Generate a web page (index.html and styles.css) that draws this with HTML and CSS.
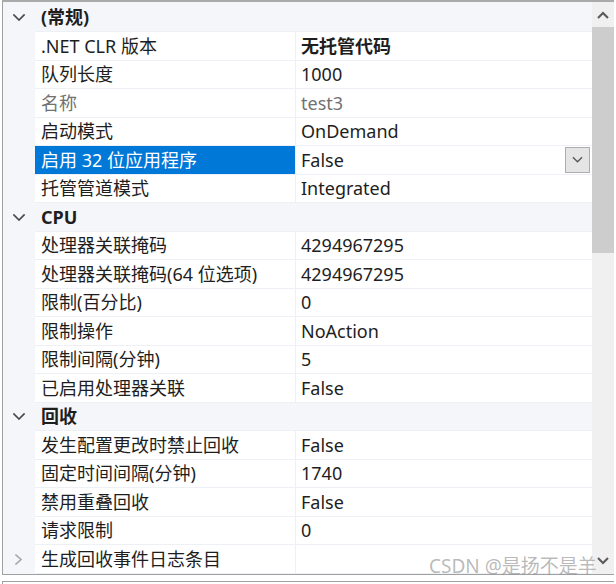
FILE: index.html
```html
<!DOCTYPE html>
<html lang="zh-CN">
<head>
  <meta charset="UTF-8" />
  <title>高级设置</title>
  <link rel="stylesheet" href="styles.css">
</head>
<body>

  <div class="frame">
    <div class="grid">
      <div class="rows">

        <div class="row cat">
          <span class="gutter"><svg class="expand" viewBox="0 0 12 7"><polyline points="1,1 6,6 11,1"/></svg></span>
          <span class="cell title">(常规)</span>
        </div>
        <div class="row"><span class="gutter"></span><span class="cell name">.NET CLR 版本</span><span class="cell val bold">无托管代码</span></div>
        <div class="row"><span class="gutter"></span><span class="cell name">队列长度</span><span class="cell val">1000</span></div>
        <div class="row dim"><span class="gutter"></span><span class="cell name">名称</span><span class="cell val">test3</span></div>
        <div class="row"><span class="gutter"></span><span class="cell name">启动模式</span><span class="cell val">OnDemand</span></div>
        <div class="row selected">
          <span class="gutter"></span>
          <span class="cell name">启用 32 位应用程序</span>
          <span class="cell val">False
            <span class="drop"><svg viewBox="0 0 12 7"><polyline points="1,1 6,6 11,1"/></svg></span>
          </span>
        </div>
        <div class="row"><span class="gutter"></span><span class="cell name">托管管道模式</span><span class="cell val">Integrated</span></div>

        <div class="row cat">
          <span class="gutter"><svg class="expand" viewBox="0 0 12 7"><polyline points="1,1 6,6 11,1"/></svg></span>
          <span class="cell title">CPU</span>
        </div>
        <div class="row"><span class="gutter"></span><span class="cell name">处理器关联掩码</span><span class="cell val">4294967295</span></div>
        <div class="row"><span class="gutter"></span><span class="cell name">处理器关联掩码(64 位选项)</span><span class="cell val">4294967295</span></div>
        <div class="row"><span class="gutter"></span><span class="cell name">限制(百分比)</span><span class="cell val">0</span></div>
        <div class="row"><span class="gutter"></span><span class="cell name">限制操作</span><span class="cell val">NoAction</span></div>
        <div class="row"><span class="gutter"></span><span class="cell name">限制间隔(分钟)</span><span class="cell val">5</span></div>
        <div class="row"><span class="gutter"></span><span class="cell name">已启用处理器关联</span><span class="cell val">False</span></div>

        <div class="row cat">
          <span class="gutter"><svg class="expand" viewBox="0 0 12 7"><polyline points="1,1 6,6 11,1"/></svg></span>
          <span class="cell title">回收</span>
        </div>
        <div class="row"><span class="gutter"></span><span class="cell name">发生配置更改时禁止回收</span><span class="cell val">False</span></div>
        <div class="row"><span class="gutter"></span><span class="cell name">固定时间间隔(分钟)</span><span class="cell val">1740</span></div>
        <div class="row"><span class="gutter"></span><span class="cell name">禁用重叠回收</span><span class="cell val">False</span></div>
        <div class="row"><span class="gutter"></span><span class="cell name">请求限制</span><span class="cell val">0</span></div>
        <div class="row">
          <span class="gutter"><svg class="collapsed" viewBox="0 0 7 11"><polyline points="1,1 6,5.5 1,10"/></svg></span>
          <span class="cell name">生成回收事件日志条目</span>
          <span class="cell val"></span>
        </div>

      </div>

      <div class="scrollbar">
        <div class="sb-btn"><svg viewBox="0 0 12 8"><polyline points="1,7 6,2 11,7"/></svg></div>
        <div class="sb-thumb"></div>
        <div class="sb-track"></div>
        <div class="sb-btn"><svg viewBox="0 0 12 8"><polyline points="1,1 6,6 11,1"/></svg></div>
      </div>
    </div>
  </div>

  <div class="desc"></div>

  <div class="watermark">CSDN @是扬不是羊</div>

</body>
</html>
```

FILE: styles.css
```css
body {
  margin: 0;
  font-family: "Noto Sans", "Noto Sans CJK SC", sans-serif;
  font-size: 18px;
  color: #1e1e1e;
  background: #fff;
  position: relative;
  height: 584px;
  overflow: hidden;
}
.frame {
  margin: 0 2px 0 2px;
  border-left: 1px solid #a0a0a0;
  border-top: 2px solid #aaaaaa;
  border-bottom: 1px solid #a0a0a0;
}
.grid {
  display: flex;
}
.rows {
  flex: 1;
  background: #f4f6fa;
  padding-top: 1.5px;
}
.row {
  display: grid;
  grid-template-columns: 32px 261px 1fr;
  height: 28.5px;
}
.gutter {
  display: flex;
  align-items: center;
  justify-content: center;
}
.gutter svg {
  fill: none;
  stroke-linecap: square;
}
.expand {
  width: 12px;
  height: 7px;
  stroke: #4a4a4a;
  stroke-width: 1.7;
}
.collapsed {
  width: 7px;
  height: 11px;
  stroke: #a8a8a8;
  stroke-width: 1.6;
  margin-right: 2px;
}
.cell {
  display: flex;
  align-items: center;
  box-sizing: border-box;
  border-bottom: 1px solid #edf0f5;
  background: #fff;
  white-space: nowrap;
  line-height: 1;
}
.name {
  padding-left: 6px;
  border-right: 1px solid #edf0f5;
}
.val {
  padding-left: 5px;
  justify-content: space-between;
}
.bold {
  font-weight: bold;
}
.cat .title {
  grid-column: 2 / 4;
  background: #f4f6fa;
  font-weight: bold;
  padding-left: 6px;
}
.dim .cell {
  color: #717171;
}
.selected .name {
  background: #0078d7;
  color: #fff;
}
.drop {
  width: 25px;
  height: 26px;
  box-sizing: border-box;
  margin-right: 2px;
  border: 1px solid #adadad;
  background: #e5e5e5;
  display: flex;
  align-items: center;
  justify-content: center;
}
.drop svg {
  width: 11px;
  height: 7px;
  fill: none;
  stroke: #555;
  stroke-width: 1.4;
}
.scrollbar {
  width: 22px;
  background: #f0f0f0;
  display: flex;
  flex-direction: column;
}
.sb-btn {
  height: 25px;
  display: flex;
  align-items: center;
  justify-content: center;
}
.sb-btn svg {
  width: 12px;
  height: 8px;
  fill: none;
  stroke: #5c5c5c;
  stroke-width: 2.2;
}
.sb-thumb {
  height: 226px;
  background: #cdcdcd;
}
.sb-track {
  flex: 1;
}
.desc {
  margin: 6px 2px 0 2px;
  border-left: 1px solid #a0a0a0;
  border-top: 1px solid #a0a0a0;
  height: 10px;
  background: #fff;
}
.watermark {
  position: absolute;
  left: 429px;
  top: 551px;
  font-size: 19px;
  color: rgba(140, 140, 140, 0.6);
  white-space: nowrap;
}
```
